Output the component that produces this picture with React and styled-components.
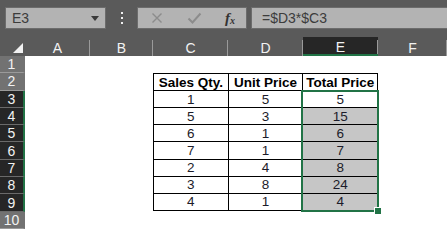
import React from "react";
import styled, { createGlobalStyle } from "styled-components";

const GlobalStyle = createGlobalStyle`
  html, body {
    margin: 0;
    padding: 0;
    background: #ffffff;
  }
  body {
    font-family: "Liberation Sans", Arial, sans-serif;
    width: 447px;
    height: 229px;
    overflow: hidden;
  }
`;

const columns = ["A", "B", "C", "D", "E", "F"];
const selectedCol = "E";
const rows = [1, 2, 3, 4, 5, 6, 7, 8, 9, 10];
const selectedRows = [3, 4, 5, 6, 7, 8, 9];

const data = [
  [1, 5, 5],
  [5, 3, 15],
  [6, 1, 6],
  [7, 1, 7],
  [2, 4, 8],
  [3, 8, 24],
  [4, 1, 4],
];

const App = () => {
  return (
    <Wrap>
      <GlobalStyle />
      <FormulaBar>
        <NameBox>
          <span>E3</span>
          <Caret />
        </NameBox>
        <Grip>
          <i />
          <i />
          <i />
        </Grip>
        <FuncBox>
          <FuncIcon>
            <svg width="12" height="12" viewBox="0 0 12 12">
              <path d="M1.5 1.5 L10.5 10.5 M10.5 1.5 L1.5 10.5" stroke="#8c8c8c" strokeWidth="1.4" fill="none" />
            </svg>
          </FuncIcon>
          <FuncIcon>
            <svg width="15" height="12" viewBox="0 0 15 12">
              <path d="M1.5 6.5 L5.5 10.5 L13.5 1.5" stroke="#8c8c8c" strokeWidth="2" fill="none" />
            </svg>
          </FuncIcon>
          <Fx>
            f<sub>x</sub>
          </Fx>
        </FuncBox>
        <FormulaInput>=$D3*$C3</FormulaInput>
      </FormulaBar>

      <Sheet>
        <Corner>
          <svg width="10" height="10" viewBox="0 0 10 10">
            <path d="M10 0 L10 10 L0 10 Z" fill="#f2f2f2" />
          </svg>
        </Corner>
        {columns.map((c) => (
          <ColHead key={c} $active={c === selectedCol}>
            {c}
          </ColHead>
        ))}
        {rows.map((r) => (
          <RowHead key={r} style={{ gridRow: r + 1 }} $active={selectedRows.includes(r)}>
            {r}
          </RowHead>
        ))}

        <Table>
          <HeadCell>Sales Qty.</HeadCell>
          <HeadCell>Unit Price</HeadCell>
          <HeadCell>Total Price</HeadCell>
          {data.map((row, i) =>
            row.map((v, j) => (
              <Cell key={i + "-" + j} $shaded={j === 2 && i > 0}>
                {v}
              </Cell>
            ))
          )}
        </Table>

        <Selection>
          <FillHandle />
        </Selection>
      </Sheet>
    </Wrap>
  );
};

const Wrap = styled.div`
  width: 447px;
  height: 229px;
  background: #ffffff;
  overflow: hidden;
`;

const FormulaBar = styled.div`
  height: 37px;
  background: #5a5a5a;
  display: flex;
  align-items: flex-start;
  padding: 7px 0 0 5px;
  box-sizing: border-box;
`;

const NameBox = styled.div`
  width: 101px;
  height: 22px;
  box-sizing: border-box;
  background: #b3b3b3;
  border: 1px solid #6c6c6c;
  display: flex;
  align-items: center;
  justify-content: space-between;
  padding: 0 6px 0 6px;
  font-size: 14px;
  color: #3c3c3c;
`;

const Caret = styled.div`
  width: 0;
  height: 0;
  border-left: 4px solid transparent;
  border-right: 4px solid transparent;
  border-top: 5px solid #3a3a3a;
`;

const Grip = styled.div`
  width: 31px;
  height: 22px;
  display: flex;
  flex-direction: column;
  align-items: center;
  justify-content: center;
  gap: 3px;
  i {
    display: block;
    width: 2px;
    height: 2px;
    background: #f0f0f0;
  }
`;

const FuncBox = styled.div`
  width: 110px;
  height: 22px;
  box-sizing: border-box;
  background: #b3b3b3;
  border: 1px solid #6c6c6c;
  display: flex;
  align-items: center;
  padding-left: 13px;
`;

const FuncIcon = styled.div`
  width: 36px;
  display: flex;
  align-items: center;
  justify-content: flex-start;
  &:nth-child(2) {
    width: 38px;
  }
`;

const Fx = styled.div`
  font-family: "Liberation Serif", "Times New Roman", serif;
  font-style: italic;
  font-weight: bold;
  font-size: 15px;
  color: #333333;
  sub {
    font-size: 10px;
    vertical-align: -1px;
  }
`;

const FormulaInput = styled.div`
  flex: 1;
  margin-left: 4px;
  height: 22px;
  box-sizing: border-box;
  background: #b3b3b3;
  border: 1px solid #6c6c6c;
  border-right: none;
  display: flex;
  align-items: center;
  padding-left: 10px;
  font-size: 14px;
  color: #3c3c3c;
`;

const Sheet = styled.div`
  display: grid;
  grid-template-columns: 25px 65px 63px 75px 75px 75px 1fr;
  grid-template-rows: 19px repeat(10, 17.3px);
  background: #ffffff;
`;

const Corner = styled.div`
  grid-row: 1;
  grid-column: 1;
  background: #5a5a5a;
  display: flex;
  align-items: flex-end;
  justify-content: flex-end;
  padding: 0 2px 3px 0;
  box-sizing: border-box;
`;

const ColHead = styled.div`
  grid-row: 1;
  position: relative;
  background: ${(p) => (p.$active ? "#262626" : "#5a5a5a")};
  border-bottom: ${(p) => (p.$active ? "2px solid #217346" : "none")};
  box-sizing: border-box;
  color: #f2f2f2;
  font-size: 14px;
  display: flex;
  align-items: center;
  justify-content: center;
  padding-top: 3px;
  &::after {
    content: "";
    position: absolute;
    right: 0;
    top: 3px;
    bottom: 0;
    width: 1px;
    background: #9a9a9a;
  }
  &:last-of-type::after {
    display: none;
  }
`;

const RowHead = styled.div`
  grid-column: 1;
  background: ${(p) => (p.$active ? "#262626" : "#727272")};
  border-bottom: 1px solid ${(p) => (p.$active ? "#6a6a6a" : "#9a9a9a")};
  border-right: 2px solid ${(p) => (p.$active ? "#217346" : "transparent")};
  box-sizing: border-box;
  color: #f2f2f2;
  font-size: 14px;
  display: flex;
  align-items: center;
  justify-content: center;
`;

const Table = styled.div`
  grid-column: 4 / 7;
  grid-row: 3 / 11;
  display: grid;
  grid-template-columns: repeat(3, 1fr);
  grid-template-rows: repeat(8, 1fr);
  border-top: 1px solid #000;
  border-left: 1px solid #000;
  box-sizing: border-box;
  margin-bottom: 1px;
`;

const Cell = styled.div`
  border-right: 1px solid #000;
  border-bottom: 1px solid #000;
  background: ${(p) => (p.$shaded ? "#c6c6c6" : "#ffffff")};
  display: flex;
  align-items: center;
  justify-content: center;
  font-size: 13.5px;
  color: #1c1c2a;
  line-height: 1;
`;

const HeadCell = styled(Cell)`
  font-weight: bold;
  color: #000;
`;

const Selection = styled.div`
  grid-column: 6 / 7;
  grid-row: 4 / 11;
  margin: -1px -1px 0 -2px;
  border: 2px solid #217346;
  position: relative;
  pointer-events: none;
  z-index: 2;
`;

const FillHandle = styled.div`
  position: absolute;
  right: -5px;
  bottom: -5px;
  width: 6px;
  height: 6px;
  background: #217346;
  border: 1px solid #ffffff;
`;

export default App;
